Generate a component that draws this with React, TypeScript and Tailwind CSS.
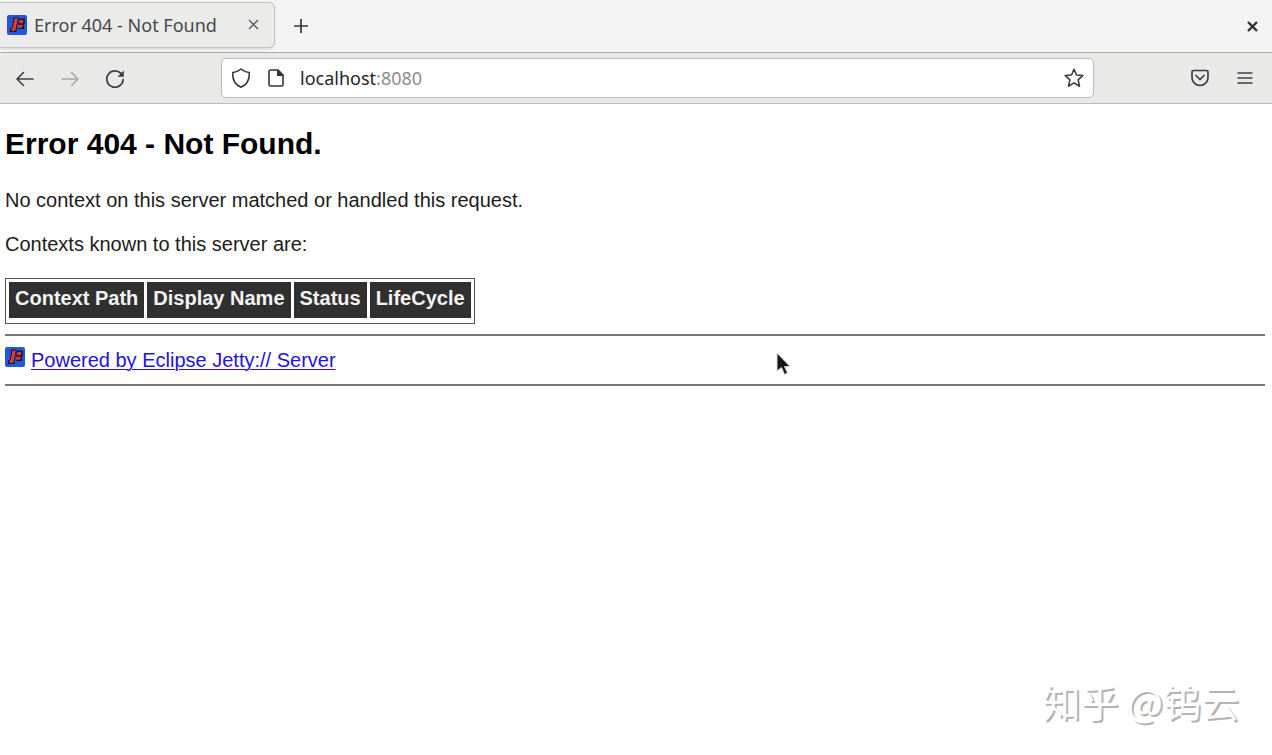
import React from 'react'

const columns = ['Context Path', 'Display Name', 'Status', 'LifeCycle']

function JettyIcon() {
  return (
    <svg width="20" height="20" viewBox="0 0 20 20" aria-hidden="true">
      <rect width="20" height="20" rx="2" fill="#2456dc" />
      <path d="M6.2 2.5H11.5L9.4 17H3L3.2 13H5Z" fill="#191430" />
      <path d="M11.5 3.5H17.8V8.5L16.8 10L17 14H11Z" fill="#191430" />
      <path d="M7.4 3.5H10.8L8.3 15.8H4.3L4.6 13.2H5.8Z" fill="#e23e2c" />
      <path d="M12.4 5H16.4L15.8 8.2H11.8ZM11.4 9.8H15.6L15.2 12.8H10.8Z" fill="#d83c32" />
    </svg>
  )
}

function TabBar() {
  return (
    <div className="flex h-[53px] items-center justify-between border-b border-[#a9a9a7] bg-[#f4f4f4]">
      <div className="flex items-center">
        <div className="mb-[3px] flex h-[46px] w-[275px] items-center rounded-r-md border border-l-0 border-[#c4c4c2] bg-[#ebebea] pl-[7px] pr-[13px] shadow-sm">
          <JettyIcon />
          <span className="ml-[7px] flex-1 text-[18px] leading-6 text-[#46494b]">Error 404 - Not Found</span>
          <button aria-label="Close tab" className="flex size-4 items-center justify-center">
            <svg width="11" height="11" viewBox="0 0 11 11" fill="none" stroke="#55585a" strokeWidth="1.3">
              <path d="M1 1L10 10M10 1L1 10" />
            </svg>
          </button>
        </div>
        <button aria-label="New tab" className="ml-[18px]">
          <svg width="16" height="16" viewBox="0 0 16 16" fill="none" stroke="#333638" strokeWidth="1.7">
            <path d="M8 1V15M1 8H15" />
          </svg>
        </button>
      </div>
      <button aria-label="Close window" className="mr-[14px]">
        <svg width="11" height="11" viewBox="0 0 11 11" fill="none" stroke="#2e3436" strokeWidth="2.4">
          <path d="M1 1L10 10M10 1L1 10" />
        </svg>
      </button>
    </div>
  )
}

function Toolbar() {
  return (
    <div className="flex h-[51px] items-center border-b border-[#bdbdbb] bg-[#e9e9e7] pl-[15px] pr-[19px]">
      <div className="flex w-[206px] shrink-0 items-center gap-[25px]">
        <button aria-label="Back">
          <svg width="20" height="20" viewBox="0 0 20 20" fill="none" stroke="#3c3f41" strokeWidth="1.6" strokeLinecap="round" strokeLinejoin="round">
            <path d="M18 11H2M8.500 4.500L2 11L8.500 17.500" />
          </svg>
        </button>
        <button aria-label="Forward" disabled>
          <svg width="20" height="20" viewBox="0 0 20 20" fill="none" stroke="#a8a9a8" strokeWidth="1.500" strokeLinecap="round" strokeLinejoin="round">
            <path d="M2 11H18M11.500 4.500L18 11L11.500 17.500" />
          </svg>
        </button>
        <button aria-label="Reload">
          <svg width="20" height="20" viewBox="0 0 20 20" fill="none">
            <path d="M15.800 5.200A8.200 8.200 0 1 0 18.200 11.500" stroke="#3c3f41" strokeWidth="1.700" strokeLinecap="round" />
            <path d="M18.800 2.500V8.800H12.500Z" fill="#3c3f41" />
          </svg>
        </button>
      </div>
      <form className="flex h-10 min-w-0 flex-1 items-center rounded-[5px] border border-[#bbbbb9] bg-white pl-[9px] pr-[9px]">
        <svg width="20" height="20" viewBox="0 0 20 20" fill="none" stroke="#333638" strokeWidth="1.6" strokeLinejoin="round" aria-hidden="true">
          <path d="M10 1C12 2.800 15 4 18.200 4.500C18.800 11 16 16.500 10 19.200C4 16.500 1.200 11 1.800 4.500C5 4 8 2.800 10 1Z" />
        </svg>
        <label htmlFor="host" aria-label="Address" className="ml-[17px]">
          <svg width="16" height="18" viewBox="0 0 16 18" fill="none" aria-hidden="true">
            <path d="M2.500 1H10L15 6V15.500Q15 17 13.500 17H2.500Q1 17 1 15.500V2.500Q1 1 2.500 1Z" stroke="#333638" strokeWidth="1.6" strokeLinejoin="round" />
            <path d="M9 1H10.500L15.500 6V7H9Z" fill="#333638" />
          </svg>
        </label>
        <input id="host" defaultValue="localhost" className="ml-4 min-w-0 field-sizing-content bg-transparent text-[18px] leading-6 text-[#242628] outline-none" />
        <span className="flex-1 text-[18px] leading-6 text-[#8b8d8d]">:8080</span>
        <button type="button" aria-label="Bookmark this page">
          <svg width="20" height="20" viewBox="0 0 20 20" fill="none" stroke="#3c3f41" strokeWidth="1.600" strokeLinejoin="round">
            <path d="M10 1.300L12.500 7L18.800 7.600L14.100 11.800L15.500 18.200L10 14.900L4.500 18.200L5.900 11.800L1.200 7.600L7.500 7Z" />
          </svg>
        </button>
      </form>
      <div className="ml-[97px] flex shrink-0 items-center gap-7">
        <button aria-label="Save to Pocket">
          <svg width="18" height="18" viewBox="0 0 18 18" fill="none" stroke="#3c3f41" strokeWidth="1.700" strokeLinecap="round" strokeLinejoin="round">
            <path d="M2.500 1.500H15.500Q17 1.500 17 3V8.500C17 13 13.500 16.500 9 16.500S1 13 1 8.500V3Q1 1.500 2.500 1.500Z" />
            <path d="M5 6.500L9 10.500L13 6.500" />
          </svg>
        </button>
        <button aria-label="Open application menu">
          <svg width="16" height="14" viewBox="0 0 16 14" fill="none" stroke="#3c3f41" strokeWidth="1.600">
            <path d="M0.500 2H15.500M0.500 7H15.500M0.500 12H15.500" />
          </svg>
        </button>
      </div>
    </div>
  )
}

function ErrorPage() {
  return (
    <main className="pl-[5px] pr-[7px] pt-5 font-['Liberation_Sans',Arial,sans-serif] text-[20px] leading-6 text-[#1c1c1c]">
      <h1 className="text-[30px] font-bold leading-10 text-black">Error 404 - Not Found.</h1>
      <p className="mt-6">No context on this server matched or handled this request.</p>
      <p className="mt-5">Contexts known to this server are:</p>
      <table className="mt-[22px] border-separate border-spacing-[3px] border border-[#555] pb-[2px]">
        <thead>
          <tr>
            {columns.map(c => (
              <th key={c} scope="col" className="bg-[#303030] px-[6px] pb-2 pt-1 text-left font-bold text-[#f4f4f4]">{c}</th>
            ))}
          </tr>
        </thead>
        <tbody />
      </table>
      <hr className="mt-[10px] border-t-2 border-[#767676]" />
      <div className="flex h-12 items-center gap-[6px]">
        <a href="https://eclipse.org/jetty" aria-label="Jetty home" className="mb-[6px]"><JettyIcon /></a>
        <a href="https://eclipse.org/jetty" className="text-[#2412dc] underline decoration-1 underline-offset-2">Powered by Eclipse Jetty:// Server</a>
      </div>
      <hr className="border-t-2 border-[#767676]" />
    </main>
  )
}

export default function App() {
  return (
    <div className="relative flex min-h-screen flex-col bg-white font-['Noto_Sans','Noto_Sans_CJK_SC',sans-serif]">
      <TabBar />
      <Toolbar />
      <ErrorPage />
      <svg className="absolute left-[776px] top-[352px]" width="16" height="25" viewBox="0 0 16 25" aria-hidden="true">
        <path d="M1 1V19L5.500 15.500L8.500 22.500L11.500 21L8.500 14.500H14Z" fill="#161616" stroke="#d8d8d8" strokeWidth="1" />
      </svg>
      <div className="mt-auto self-end pb-[30px] pr-[33px] font-['Noto_Sans_CJK_SC',sans-serif] text-[38px] leading-12 text-white [text-shadow:2px_2px_0_#b4b4b4]">知乎 @钨云</div>
    </div>
  )
}
